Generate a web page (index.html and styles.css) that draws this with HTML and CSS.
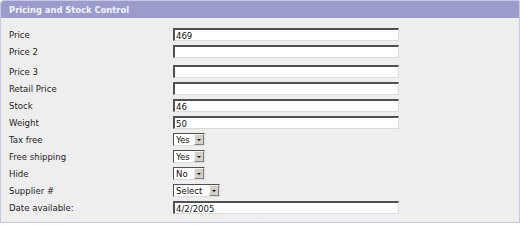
FILE: index.html
```html
<!DOCTYPE html>
<html lang="en">
<head>
    <meta charset="UTF-8">
    <title>Pricing and Stock Control</title>
    <link rel="stylesheet" href="styles.css">
</head>
<body>
    <div class="panel">
        <div class="panel-title">Pricing and Stock Control</div>

        <div class="panel-body">
            <div class="row">
                <label for="price">Price</label>
                <input type="text" id="price" value="469">
            </div>
            <div class="row">
                <label for="price2">Price 2</label>
                <input type="text" id="price2">
            </div>
            <div class="row gap">
                <label for="price3">Price 3</label>
                <input type="text" id="price3">
            </div>
            <div class="row">
                <label for="retail">Retail Price</label>
                <input type="text" id="retail">
            </div>
            <div class="row">
                <label for="stock">Stock</label>
                <input type="text" id="stock" value="46">
            </div>
            <div class="row">
                <label for="weight">Weight</label>
                <input type="text" id="weight" value="50">
            </div>
            <div class="row">
                <label for="taxfree">Tax free</label>
                <span class="dropdown">
                    <select id="taxfree"><option>Yes</option><option>No</option></select>
                </span>
            </div>
            <div class="row">
                <label for="freeship">Free shipping</label>
                <span class="dropdown">
                    <select id="freeship"><option>Yes</option><option>No</option></select>
                </span>
            </div>
            <div class="row">
                <label for="hide">Hide</label>
                <span class="dropdown">
                    <select id="hide"><option>No</option><option>Yes</option></select>
                </span>
            </div>
            <div class="row">
                <label for="supplier">Supplier #</label>
                <span class="dropdown">
                    <select id="supplier" class="wide"><option>Select</option></select>
                </span>
            </div>
            <div class="row">
                <label for="available">Date available:</label>
                <input type="text" id="available" value="4/2/2005">
            </div>
        </div>
    </div>
</body>
</html>
```

FILE: styles.css
```css
body {
    margin: 0;
    background-color: #ffffff;
    font-family: "DejaVu Sans Condensed", "DejaVu Sans", sans-serif;
    font-stretch: condensed;
    font-size: 9.5px;
    color: #1e1e1e;
}
.panel {
    width: 518px;
    height: 221px;
    border: 1px solid #c8c8e2;
    border-radius: 4px 0 0 0;
    background-color: #eeeeee;
}
.panel-title {
    height: 17px;
    line-height: 17px;
    padding-left: 8px;
    background-color: #9b9bcc;
    color: #f4f4ff;
    font-weight: bold;
    font-size: 9.3px;
    border-radius: 3px 0 0 0;
}
.panel-body {
    padding: 8px 0 0 8px;
}
.row {
    display: flex;
    align-items: center;
    height: 17px;
}
.row.gap {
    margin-top: 3px;
}
label {
    width: 164px;
}
input {
    box-sizing: border-box;
    width: 226px;
    height: 13px;
    padding: 0 0 0 1px;
    margin: 0;
    border-top: 2px solid #505050;
    border-left: 2px solid #505050;
    border-right: 1px solid #dcdcd6;
    border-bottom: 1px solid #dcdcd6;
    background-color: #ffffff;
    font-family: inherit;
    font-size: 9.5px;
    color: #111111;
    outline: none;
}
.dropdown {
    position: relative;
    display: inline-block;
    height: 13px;
}
select {
    appearance: none;
    -webkit-appearance: none;
    box-sizing: border-box;
    width: 32px;
    height: 13px;
    padding: 0 0 0 2px;
    margin: 0;
    border-top: 1px solid #505050;
    border-left: 1px solid #505050;
    border-right: 1px solid #dcdcd6;
    border-bottom: 1px solid #dcdcd6;
    border-radius: 0;
    background-color: #ffffff;
    font-family: inherit;
    font-size: 9.5px;
    line-height: 11px;
    color: #111111;
}
select.wide {
    width: 47px;
}
.dropdown::after {
    content: "";
    position: absolute;
    top: 1px;
    right: 1px;
    width: 8px;
    height: 9px;
    border-top: 1px solid #f4f4f4;
    border-left: 1px solid #f4f4f4;
    border-right: 1px solid #808080;
    border-bottom: 1px solid #808080;
    background-color: #d4d0c8;
    pointer-events: none;
}
.dropdown::before {
    content: "";
    position: absolute;
    top: 6px;
    right: 4px;
    width: 0;
    height: 0;
    border-left: 2px solid transparent;
    border-right: 2px solid transparent;
    border-top: 2px solid #000000;
    z-index: 1;
    pointer-events: none;
}
```
